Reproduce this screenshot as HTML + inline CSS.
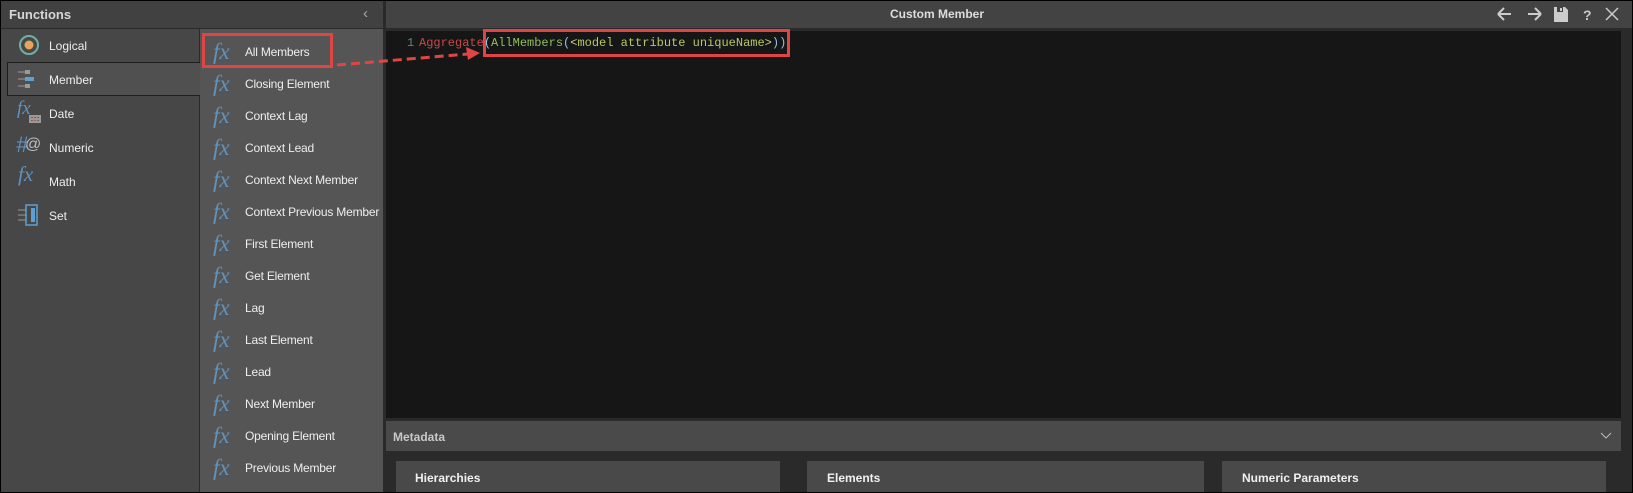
<!DOCTYPE html>
<html><head><meta charset="utf-8"><style>
*{margin:0;padding:0;box-sizing:border-box}
body{width:1633px;height:493px;background:#000;position:relative;overflow:hidden;font-family:"Liberation Sans",sans-serif;font-size:12px;color:#e8e8e8}
.a{position:absolute}
.fx{position:absolute;font-family:"Liberation Serif",serif;font-style:italic;font-size:23px;color:#5f93bf;line-height:1}
.cat{position:absolute;left:49px;font-size:12px;color:#eee}
.item{position:absolute;left:245px;font-size:12px;color:#eee;letter-spacing:-0.2px}
.code{position:absolute;top:36px;font-family:"Liberation Mono",monospace;font-size:12px;white-space:pre;line-height:14px}
</style></head><body>
<div class="a" style="left:1px;top:1px;width:382px;height:27px;background:#414141"></div>
<div class="a" style="left:9px;top:7px;font-size:13px;font-weight:bold;color:#d6d6d6">Functions</div>
<div class="a" style="left:363px;top:5px;font-size:15px;color:#aaa">&#8249;</div>
<div class="a" style="left:1px;top:28px;width:382px;height:1px;background:#2a2a2a"></div>
<div class="a" style="left:1px;top:29px;width:198px;height:463px;background:#474747"></div>
<div class="a" style="left:199px;top:29px;width:1px;height:463px;background:#2a2a2a"></div>
<div class="a" style="left:200px;top:29px;width:183px;height:463px;background:#555"></div>
<div class="a" style="left:383px;top:1px;width:3px;height:491px;background:#2a2a2a"></div>
<div class="a" style="left:7px;top:62px;width:193px;height:34px;background:#505050;border:1px solid #1e1e1e;border-right:none"></div>
<svg class="a" style="left:18px;top:34px" width="24" height="24"><circle cx="11" cy="11" r="9" fill="none" stroke="#6fb0a8" stroke-width="2"/><circle cx="11" cy="11" r="4.5" fill="#e8a25a"/></svg>
<svg class="a" style="left:17px;top:69px" width="24" height="22"><g fill="#9a9a9a"><rect x="8" y="1" width="5" height="4"/><rect x="8" y="15" width="5" height="4"/></g><rect x="8" y="8" width="9" height="4" fill="#5fa0d0"/><g stroke="#9a9a9a"><line x1="1" y1="3" x2="8" y2="3"/><line x1="1" y1="10" x2="8" y2="10"/><line x1="1" y1="17" x2="8" y2="17"/></g></svg>
<div class="fx" style="left:17px;top:99px;font-size:19px">fx</div>
<svg class="a" style="left:29px;top:115px" width="12" height="8"><rect width="12" height="8" fill="#999"/><g fill="#666"><rect x="2" y="2" width="2" height="1"/><rect x="5" y="2" width="2" height="1"/><rect x="8" y="2" width="2" height="1"/><rect x="2" y="5" width="2" height="1"/><rect x="8" y="5" width="2" height="1"/></g><rect x="5" y="5" width="2" height="1" fill="#d44"/></svg>
<div class="a" style="left:16px;top:132px;font-size:22px;color:#5f93bf;font-style:italic">#</div>
<div class="a" style="left:25px;top:136px;font-size:16px;color:#bbb">@</div>
<div class="fx" style="left:18px;top:164px;font-size:21px">fx</div>
<svg class="a" style="left:17px;top:204px" width="24" height="24"><rect x="9" y="1" width="11" height="20" fill="none" stroke="#5fa0d0" stroke-width="1.5"/><rect x="14" y="4" width="4" height="14" fill="#5fa0d0"/><g stroke="#9a9a9a"><line x1="1" y1="6" x2="9" y2="6"/><line x1="1" y1="11" x2="9" y2="11"/><line x1="1" y1="16" x2="9" y2="16"/></g></svg>
<div class="cat" style="top:39px">Logical</div>
<div class="cat" style="top:73px">Member</div>
<div class="cat" style="top:107px">Date</div>
<div class="cat" style="top:141px">Numeric</div>
<div class="cat" style="top:175px">Math</div>
<div class="cat" style="top:209px">Set</div>
<div class="fx" style="left:213px;top:40px">fx</div><div class="item" style="top:45px">All Members</div>
<div class="fx" style="left:213px;top:72px">fx</div><div class="item" style="top:77px">Closing Element</div>
<div class="fx" style="left:213px;top:104px">fx</div><div class="item" style="top:109px">Context Lag</div>
<div class="fx" style="left:213px;top:136px">fx</div><div class="item" style="top:141px">Context Lead</div>
<div class="fx" style="left:213px;top:168px">fx</div><div class="item" style="top:173px">Context Next Member</div>
<div class="fx" style="left:213px;top:200px">fx</div><div class="item" style="top:205px">Context Previous Member</div>
<div class="fx" style="left:213px;top:232px">fx</div><div class="item" style="top:237px">First Element</div>
<div class="fx" style="left:213px;top:264px">fx</div><div class="item" style="top:269px">Get Element</div>
<div class="fx" style="left:213px;top:296px">fx</div><div class="item" style="top:301px">Lag</div>
<div class="fx" style="left:213px;top:328px">fx</div><div class="item" style="top:333px">Last Element</div>
<div class="fx" style="left:213px;top:360px">fx</div><div class="item" style="top:365px">Lead</div>
<div class="fx" style="left:213px;top:392px">fx</div><div class="item" style="top:397px">Next Member</div>
<div class="fx" style="left:213px;top:424px">fx</div><div class="item" style="top:429px">Opening Element</div>
<div class="fx" style="left:213px;top:456px">fx</div><div class="item" style="top:461px">Previous Member</div>
<div class="a" style="left:202px;top:33px;width:131px;height:35px;border:3px solid #e04545"></div>
<div class="a" style="left:386px;top:1px;width:1246px;height:27px;background:#434343"></div>
<div class="a" style="left:386px;top:28px;width:1246px;height:3px;background:#2a2a2a"></div>
<div class="a" style="left:880px;top:7px;width:114px;text-align:center;font-size:12px;font-weight:bold;color:#ddd">Custom Member</div>
<svg class="a" style="left:1496px;top:6px" width="130" height="18" fill="none" stroke="#ccc" stroke-width="2">
<path d="M2 8H15M2 8L8 2M2 8L8 14"/>
<path d="M32 8H45M45 8L39 2M45 8L39 14"/>
<path d="M58 1H69L72 4V16H58Z" fill="#ccc" stroke="none"/><rect x="61" y="1" width="6" height="5" fill="#434343" stroke="none"/><rect x="64" y="2" width="2" height="3" fill="#ccc" stroke="none"/>
<text x="87" y="14" fill="#ccc" stroke="none" font-family="Liberation Sans" font-weight="bold" font-size="14">?</text>
<path d="M110 2L122 14M122 2L110 14" stroke-width="1.5"/>
</svg>
<div class="a" style="left:386px;top:31px;width:1235px;height:387px;background:#161616"></div>
<div class="a" style="left:1621px;top:31px;width:11px;height:461px;background:#2a2a2a"></div>
<div class="code" style="left:407px;color:#5f8585">1</div>
<div class="code" style="left:419px"><span style="color:#c94848">Aggregate</span><span style="color:#8fc4e8">(</span><span style="color:#8fbf5a">AllMembers</span><span style="color:#8fc4e8">(</span><span style="color:#d0d08a">&lt;</span><span style="color:#b8c860">model attribute uniqueName</span><span style="color:#d0d08a">&gt;</span><span style="color:#8fc4e8">))</span></div>
<div class="a" style="left:483px;top:29px;width:307px;height:28px;border:3px solid #e04545"></div>
<svg class="a" style="left:330px;top:44px" width="160" height="30"><path d="M7 21L138 10" stroke="#e04545" stroke-width="3" stroke-dasharray="9 5" fill="none"/><path d="M150 9L136 3L138 16Z" fill="#e04545"/></svg>
<div class="a" style="left:386px;top:418px;width:1235px;height:74px;background:#2a2a2a"></div>
<div class="a" style="left:386px;top:421px;width:1235px;height:30px;background:#4a4a4a"></div>
<div class="a" style="left:393px;top:430px;font-size:12px;font-weight:bold;color:#c8c8c8">Metadata</div>
<svg class="a" style="left:1600px;top:432px" width="12" height="8"><path d="M1 1L6 6L11 1" stroke="#bbb" fill="none"/></svg>
<div class="a" style="left:396px;top:461px;width:384px;height:31px;background:#494949"></div>
<div class="a" style="left:807px;top:461px;width:397px;height:31px;background:#494949"></div>
<div class="a" style="left:1222px;top:461px;width:384px;height:31px;background:#494949"></div>
<div class="a" style="left:415px;top:471px;font-weight:bold;color:#f0f0f0">Hierarchies</div>
<div class="a" style="left:827px;top:471px;font-weight:bold;color:#f0f0f0">Elements</div>
<div class="a" style="left:1242px;top:471px;font-weight:bold;color:#f0f0f0">Numeric Parameters</div>
</body></html>
